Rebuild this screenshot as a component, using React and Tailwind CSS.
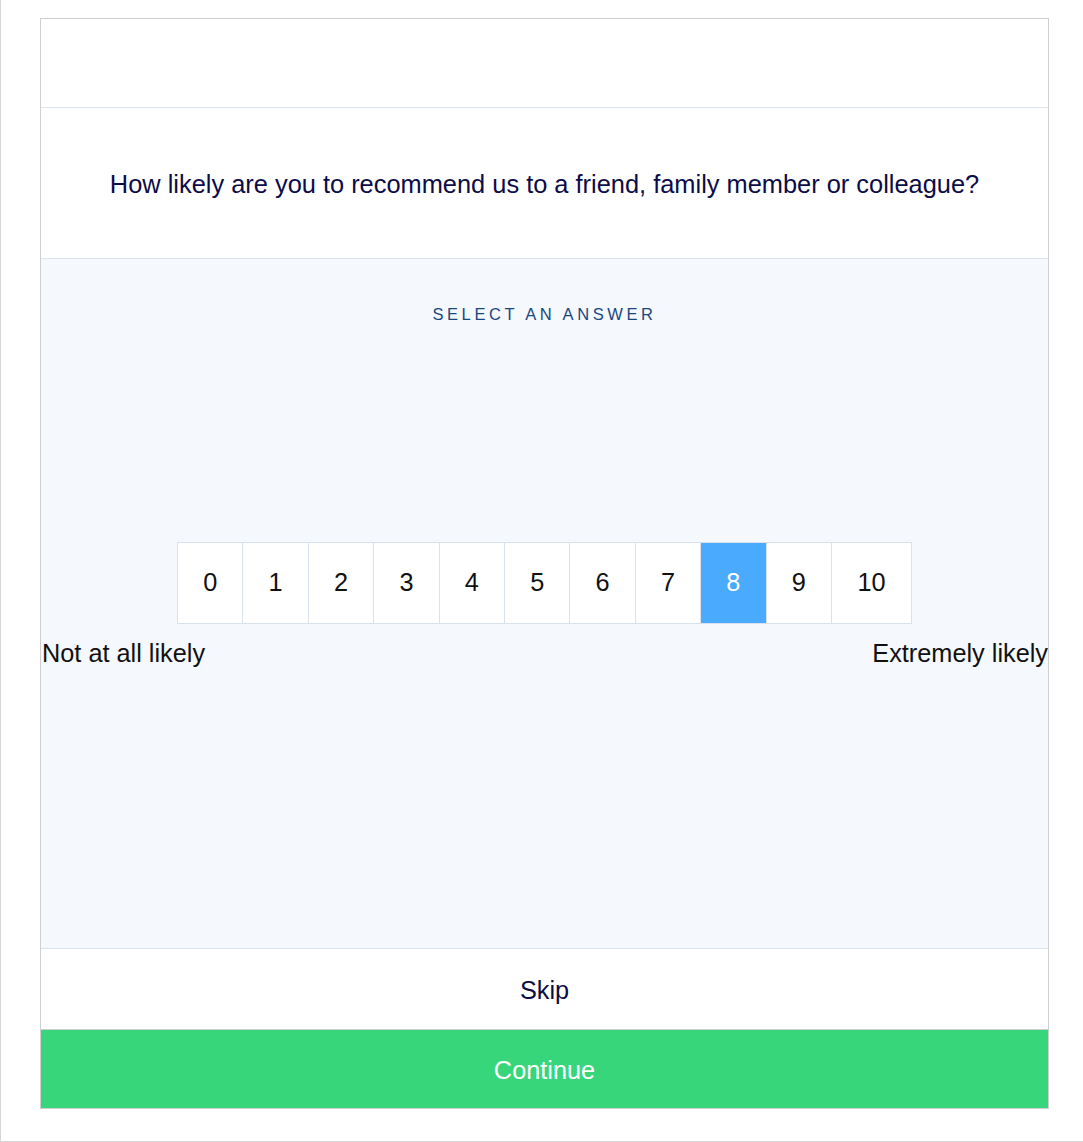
import React, { useState } from "react";

const SCORES = [0, 1, 2, 3, 4, 5, 6, 7, 8, 9, 10];

const ScoreButton = ({ value, selected, onClick }) => (
  <button
    onClick={onClick}
    className={`h-[80px] flex items-center justify-center pt-[1px] border-r border-[#d9e1ee] last:border-r-0 text-[25.3px] ${value === 10 ? "w-[79px]" : "w-[65.4px]"} ${selected ? "bg-[#4aabfe] text-white" : "bg-white text-[#111111]"}`}
  >
    {value}
  </button>
);

export default function App() {
  const [score, setScore] = useState(8);

  return (
    <div
      className="w-[1083px] h-[1142px] bg-white border-l border-b border-[#d6d6d6] pt-[18px]"
      style={{ fontFamily: '"Liberation Sans", Arial, sans-serif' }}
    >
      <div className="ml-[39px] w-[1009px] border border-[#cfcfcf] flex flex-col">
        <div className="h-[89px] border-b border-[#dde3ec]" />

        <div className="h-[151px] border-b border-[#dde3ec] flex items-center justify-center">
          <h1 className="text-[25.4px] text-[#0c0c48] pt-[3px]">
            How likely are you to recommend us to a friend, family member or colleague?
          </h1>
        </div>

        <div className="h-[690px] bg-[#f5f8fd] border-b border-[#dde3ec] flex flex-col items-center pt-[43px]">
          <div className="text-[16.5px] tracking-[3.6px] text-[#1a4780]">SELECT AN ANSWER</div>

          <div className="mt-[215px] flex border border-[#d9e1ee] bg-white">
            {SCORES.map((v) => (
              <ScoreButton key={v} value={v} selected={v === score} onClick={() => setScore(v)} />
            ))}
          </div>

          <div className="w-full flex justify-between mt-[11px] text-[25.3px] text-[#111111]">
            <span className="pl-[1px]">Not at all likely</span>
            <span>Extremely likely</span>
          </div>
        </div>

        <button className="h-[81px] pt-[3px] border-b border-[#cccccc] text-[25.3px] text-[#0c0c48] flex items-center justify-center">
          Skip
        </button>

        <button className="h-[78px] pt-[3px] bg-[#37d67a] text-white text-[25.3px] flex items-center justify-center">
          Continue
        </button>
      </div>
    </div>
  );
}
